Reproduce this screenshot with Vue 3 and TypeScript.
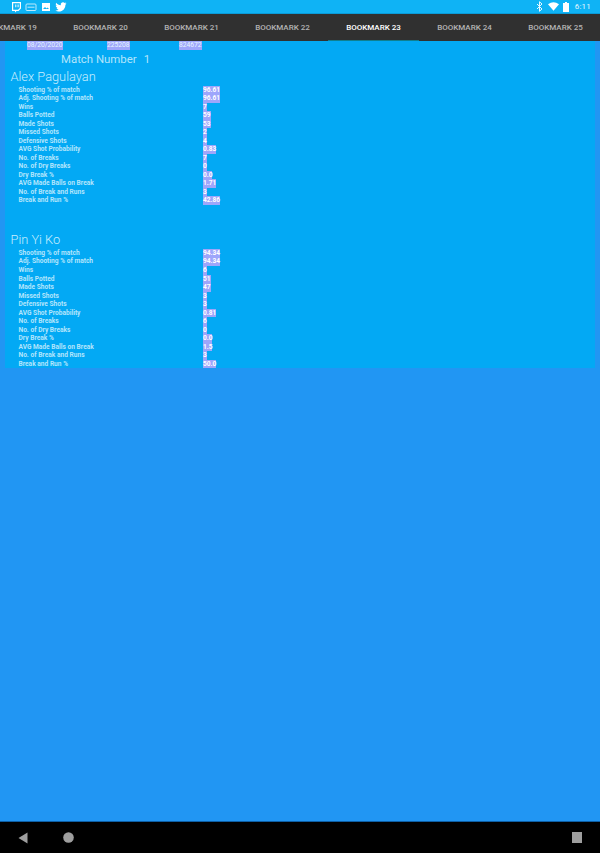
<script setup lang="ts">
const tabs: string[] = [19, 20, 21, 22, 23, 24, 25].map((n) => `BOOKMARK ${n}`);
interface Player { name: string; values: string[] }
const labels: string[] = [
  'Shooting % of match', 'Adj. Shooting % of match', 'Wins', 'Balls Potted', 'Made Shots',
  'Missed Shots', 'Defensive Shots', 'AVG Shot Probability', 'No. of Breaks', 'No. of Dry Breaks',
  'Dry Break %', 'AVG Made Balls on Break', 'No. of Break and Runs', 'Break and Run %',
];
const players: Player[] = [
  { name: 'Alex Pagulayan', values: ['96.61', '96.61', '7', '59', '53', '2', '4', '0.83', '7', '0', '0.0', '1.71', '3', '42.86'] },
  { name: 'Pin Yi Ko', values: ['94.34', '94.34', '6', '51', '47', '3', '3', '0.81', '6', '0', '0.0', '1.5', '3', '50.0'] },
];
</script>

<template>
  <div class="screen">
    <header class="status">
      <div class="status-left">
        <svg width="12" height="12" viewBox="0 0 12 12"><path fill="#fff" d="M2 1h9v6.500L8.500 10H6.500L5 11.500V10H2z"/><path fill="#0fb3f5" d="M3.200 2.200h6.600v4.800L8 8.800H3.200z"/><path fill="#fff" d="M5.300 3.600h1v2.600h-1zM7.600 3.600h1v2.600h-1z"/></svg>
        <svg width="12" height="12" viewBox="0 0 12 12"><rect x="1" y="3" width="10" height="6.500" rx="1" fill="none" stroke="#bfeafc" stroke-width="1"/><path stroke="#bfeafc" stroke-width="1" d="M2.500 6.200h7"/></svg>
        <svg width="12" height="12" viewBox="0 0 12 12"><path fill="#fff" d="M2 2h8v8H2z"/><path fill="#0fb3f5" d="M3 8.100l2-2.200 1.500 1.500 1-.9L9 8.100z"/></svg>
        <svg width="12" height="12" viewBox="0 0 24 24"><path fill="#fff" d="M23 4.900c-.8.400-1.700.600-2.600.700.900-.600 1.600-1.400 2-2.500-.900.500-1.900.900-2.900 1.100a4.600 4.600 0 0 0-7.900 4.200C7.800 8.200 4.400 6.400 2.200 3.600a4.600 4.600 0 0 0 1.400 6.100c-.700 0-1.400-.200-2.100-.600 0 2.200 1.600 4.100 3.700 4.600-.700.200-1.400.200-2.100.100.600 1.800 2.300 3.100 4.300 3.200A9.300 9.300 0 0 1 .6 18.900 13 13 0 0 0 7.700 21c8.500 0 13.400-7.200 13.100-13.700.900-.600 1.700-1.400 2.200-2.400z"/></svg>
      </div>
      <div class="status-right">
        <svg width="8" height="11" viewBox="0 0 8 11"><path fill="none" stroke="#e8f8ff" stroke-width="1" d="M1 3l5 5-2.500 2.300V.7L6 3 1 8"/></svg>
        <svg class="wifi" width="11" height="9" viewBox="0 0 11 9"><path fill="#fff" d="M0 2.200Q5.500-1.500 11 2.200L5.500 8.800z"/></svg>
        <svg class="battery" width="6" height="10" viewBox="0 0 6 10"><path fill="#fff" d="M2 0h2v1h2v9H0V1h2z"/></svg>
        <span class="clock">6:11</span>
      </div>
    </header>

    <nav class="tabbar">
      <div class="tabstrip">
        <div v-for="tab in tabs" :key="tab" class="tab" :class="{ active: tab === 'BOOKMARK 23' }">{{ tab }}</div>
      </div>
    </nav>

    <main class="page">
      <section class="panel">
        <div class="meta">
          <span class="mark">08/20/2020</span>
          <span class="mark">225208</span>
          <span class="mark">824672</span>
        </div>
        <div class="match"><span>Match Number</span><span>1</span></div>
        <article v-for="player in players" :key="player.name" class="player">
          <h2 class="name">{{ player.name }}</h2>
          <div v-for="(label, i) in labels" :key="label" class="row">
            <span class="label">{{ label }}</span>
            <span><span class="mark value">{{ player.values[i] }}</span></span>
          </div>
        </article>
      </section>
    </main>

    <footer class="navbar">
      <svg class="nav-back" width="10" height="12" viewBox="0 0 10 12"><path fill="#9e9e9e" d="M9.500.5v11L.5 6z"/></svg>
      <svg class="nav-home" width="11" height="11" viewBox="0 0 11 11"><circle cx="5.500" cy="5.500" r="5.300" fill="#9e9e9e"/></svg>
      <svg class="nav-recent" width="10" height="11" viewBox="0 0 10 11"><rect width="10" height="11" fill="#9e9e9e"/></svg>
    </footer>
  </div>
</template>

<style>
html, body { margin: 0; padding: 0; }
</style>

<style scoped>
.screen {
  width: 600px;
  height: 853px;
  display: flex;
  flex-direction: column;
  overflow: hidden;
  background: #2196f3;
  font-family: Roboto, "Liberation Sans", sans-serif;
}
.status {
  height: 13px;
  flex: none;
  display: flex;
  justify-content: space-between;
  align-items: center;
  padding: 0 9px 0 10px;
  background: #0fb3f5;
}
.status-left { display: flex; gap: 3px; align-items: center; }
.status-right { display: flex; align-items: center; gap: 4px; }
.clock { color: #e8f8ff; font-size: 8px; margin-left: 2px; letter-spacing: 0.2px; }
.tabbar {
  flex: none;
  overflow: hidden;
  background: #303030;
  border-top: 1px solid #0a9bd8;
  height: 27px;
}
.tabstrip { display: flex; margin-left: -36px; width: 700px; }
.tab {
  width: 91px;
  height: 27px;
  box-sizing: border-box;
  flex: none;
  text-align: center;
  line-height: 27px;
  font-size: 8px;
  font-weight: 500;
  color: #b3b3b3;
}
.tab.active { color: #fff; border-bottom: 1px solid #0f7f8f; }
.page { flex: 1; padding: 0 5px; }
.panel {
  height: 327px;
  background: #03a9f4;
  overflow: hidden;
}
.meta {
  display: grid;
  grid-template-columns: 80px 72px auto;
  justify-content: start;
  justify-items: start;
  padding: 0 0 0 22px;
  height: 9px;
  line-height: 8px;
  font-size: 6.700px;
}
.mark { background: #9ea6fb; color: #e6f6ff; }
.match {
  display: flex;
  gap: 7px;
  padding-left: 56px;
  margin-top: 2px;
  height: 14px;
  line-height: 14px;
  font-size: 11.400px;
  color: #b3e5fc;
}
.player { padding-left: 5.500px; }
.player + .player { margin-top: 26.500px; }
.name {
  margin: 2px 0 0;
  height: 17.500px;
  line-height: 18px;
  font-size: 12.800px;
  font-weight: 300;
  color: #c9eefe;
}
.row {
  display: grid;
  grid-template-columns: 184.500px auto;
  justify-content: start;
  padding-left: 8px;
  height: 8.540px;
  line-height: 8.540px;
  font-size: 6.600px;
  font-weight: 700;
}
.label { color: #b3e5fc; }
.value { display: inline-block; height: 8.540px; color: #fff; }
.navbar {
  flex: none;
  background: #000;
  border-top: 1px solid #0d5fa6;
  height: 31px;
  display: flex;
  align-items: center;
  padding: 0 18px;
}
.nav-home { margin-left: 35px; }
.nav-recent { margin-left: auto; }
</style>
